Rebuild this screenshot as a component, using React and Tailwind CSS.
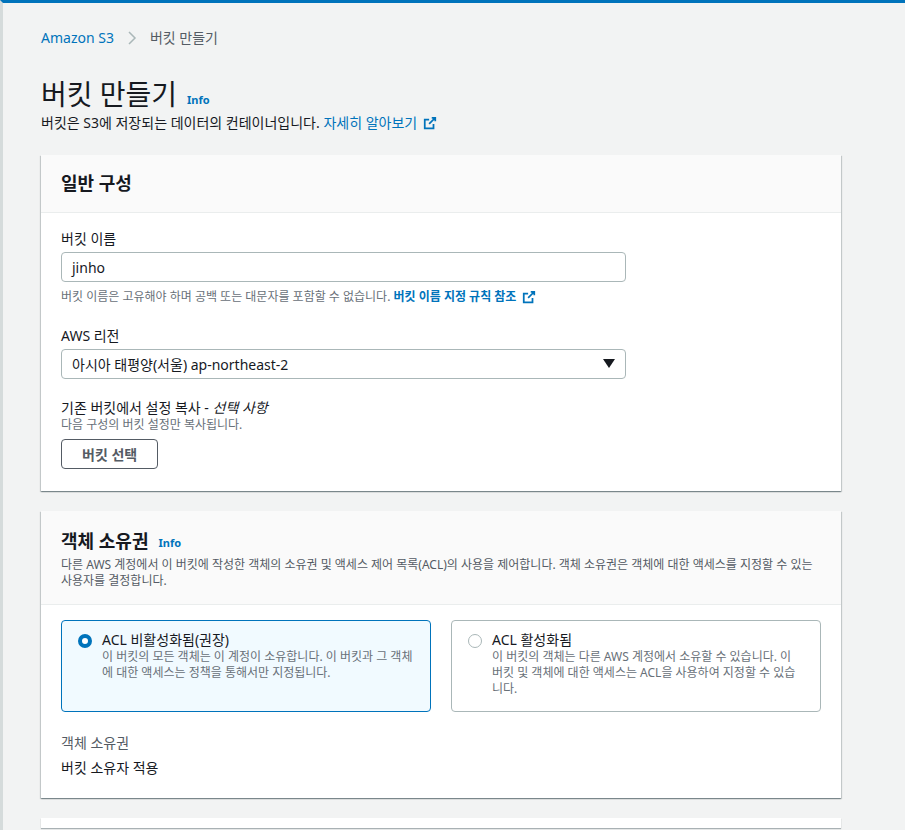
const Ext = () => (
  <svg width="14" height="14" viewBox="0 0 16 16" className="inline-block ml-1.5 -mt-0.5" fill="none" stroke="#0073bb" strokeWidth="2">
    <path d="M10 2h4v4M14 2 7 9M12 9v5H2V4h5" />
  </svg>
);

export default function App() {
  return (
    <div
      className="min-h-[830px] bg-[#f2f3f3] border-t-[3px] border-[#0073bb] border-l-[3px] border-l-[#d5dbdb] text-[#16191f]"
      style={{ fontFamily: '"Noto Sans", "Noto Sans CJK KR", sans-serif' }}
    >
      <div className="pl-[38px] w-[838px]">
        <div className="pt-[24px] flex items-center text-[14px]">
          <span className="text-[#0073bb]">Amazon S3</span>
          <svg width="12" height="14" viewBox="0 0 12 14" className="mx-3" fill="none" stroke="#aab7b8" strokeWidth="1.5"><path d="M3 1l6 6-6 6" /></svg>
          <span className="text-[#545b64]">버킷 만들기</span>
        </div>
        <div className="mt-[28px] flex items-end gap-2.5">
          <h1 className="text-[28px] leading-[36px]">버킷 만들기</h1>
          <span className="text-[#0073bb] text-[11px] font-bold mb-1">Info</span>
        </div>
        <p className="text-[14px] mt-0">
          버킷은 S3에 저장되는 데이터의 컨테이너입니다. <span className="text-[#0073bb]">자세히 알아보기</span><Ext />
        </p>

        <div className="mt-[22px] bg-white shadow-[0_1px_1px_0_rgba(0,28,36,0.3),1px_1px_1px_0_rgba(0,28,36,0.15),-1px_1px_1px_0_rgba(0,28,36,0.15)]">
          <div className="bg-[#fafafa] border-b border-[#eaeded] px-5 h-[58px] flex items-center">
            <h2 className="text-[18px] font-bold">일반 구성</h2>
          </div>
          <div className="px-5 pt-[15px] pb-[22px]">
            <div className="text-[14px]">버킷 이름</div>
            <div className="mt-[3px] w-[565px] h-[30px] border border-[#aab7b8] rounded-sm flex items-center px-2.5 text-[14px]">jinho</div>
            <div className="text-[12px] text-[#687078] mt-1.5">
              버킷 이름은 고유해야 하며 공백 또는 대문자를 포함할 수 없습니다. <span className="text-[#0073bb] font-bold">버킷 이름 지정 규칙 참조</span><Ext />
            </div>
            <div className="text-[14px] mt-[19px]">AWS 리전</div>
            <div className="mt-[3px] w-[565px] h-[30px] border border-[#aab7b8] rounded-sm flex items-center justify-between px-2.5 text-[14px]">
              <span>아시아 태평양(서울) ap-northeast-2</span>
              <svg width="12" height="10" viewBox="0 0 12 10"><path d="M0 0h12L6 9z" fill="#16191f" /></svg>
            </div>
            <div className="text-[14px] mt-[20px] leading-[18px]">기존 버킷에서 설정 복사 - <i>선택 사항</i></div>
            <div className="text-[12px] text-[#687078] leading-[16px]">다음 구성의 버킷 설정만 복사됩니다.</div>
            <button className="mt-1.5 h-[30px] px-5 border border-[#545b64] rounded-sm text-[14px] font-bold text-[#545b64]">버킷 선택</button>
          </div>
        </div>

        <div className="mt-[20px] bg-white shadow-[0_1px_1px_0_rgba(0,28,36,0.3),1px_1px_1px_0_rgba(0,28,36,0.15),-1px_1px_1px_0_rgba(0,28,36,0.15)]">
          <div className="bg-[#fafafa] border-b border-[#eaeded] px-5 pt-[18px] pb-[15px]">
            <div className="flex items-end gap-2.5">
              <h2 className="text-[18px] font-bold leading-[24px]">객체 소유권</h2>
              <span className="text-[#0073bb] text-[11px] font-bold mb-0.5">Info</span>
            </div>
            <p className="text-[12px] text-[#545b64] leading-[16px] mt-1">
              다른 AWS 계정에서 이 버킷에 작성한 객체의 소유권 및 액세스 제어 목록(ACL)의 사용을 제어합니다. 객체 소유권은 객체에 대한 액세스를 지정할 수 있는 사용자를 결정합니다.
            </p>
          </div>
          <div className="px-5 pt-[15px] pb-[20px]">
            <div className="grid grid-cols-2 gap-5">
              <div className="h-[92px] border border-[#0073bb] bg-[#f1faff] rounded-sm px-4 pt-2.5 flex gap-2.5">
                <span className="mt-[3px] w-[14px] h-[14px] shrink-0 rounded-full border-[4px] border-[#0073bb] bg-white" />
                <div>
                  <div className="text-[14px] leading-[18px]">ACL 비활성화됨(권장)</div>
                  <div className="text-[12px] text-[#687078] leading-[16px]">이 버킷의 모든 객체는 이 계정이 소유합니다. 이 버킷과 그 객체에 대한 액세스는 정책을 통해서만 지정됩니다.</div>
                </div>
              </div>
              <div className="h-[92px] border border-[#aab7b8] rounded-sm px-4 pt-2.5 flex gap-2.5">
                <span className="mt-[3px] w-[14px] h-[14px] shrink-0 rounded-full border border-[#aab7b8] bg-white" />
                <div>
                  <div className="text-[14px] leading-[18px]">ACL 활성화됨</div>
                  <div className="text-[12px] text-[#687078] leading-[16px]">이 버킷의 객체는 다른 AWS 계정에서 소유할 수 있습니다. 이 버킷 및 객체에 대한 액세스는 ACL을 사용하여 지정할 수 있습니다.</div>
                </div>
              </div>
            </div>
            <div className="text-[14px] text-[#545b64] mt-[20px]">객체 소유권</div>
            <div className="text-[14px] mt-[4px]">버킷 소유자 적용</div>
          </div>
        </div>

        <div className="mt-[20px] h-[10px] bg-white shadow-[0_1px_1px_0_rgba(0,28,36,0.3)]" />
      </div>
    </div>
  );
}
